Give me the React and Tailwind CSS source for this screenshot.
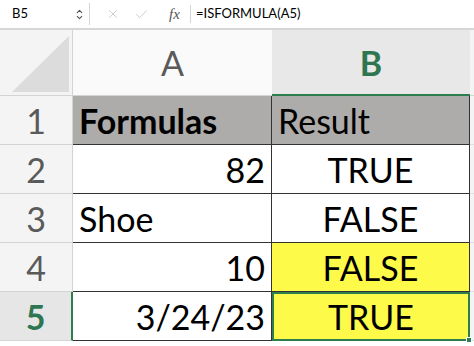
import { ChevronUp, ChevronDown, X, Check } from "lucide-react";

const rows = [
  { n: "1", a: "Formulas", aAlign: "left", aBold: true, b: "Result", bAlign: "left", bg: "gray" },
  { n: "2", a: "82", aAlign: "right", b: "TRUE", bAlign: "center" },
  { n: "3", a: "Shoe", aAlign: "left", b: "FALSE", bAlign: "center" },
  { n: "4", a: "10", aAlign: "right", b: "FALSE", bAlign: "center", bg: "yellow" },
  { n: "5", a: "3/24/23", aAlign: "right", b: "TRUE", bAlign: "center", bg: "yellow", active: true },
];

const font = { fontFamily: "Lato, 'Liberation Sans', sans-serif" };

function FormulaBar() {
  return (
    <div className="flex h-[30px] items-center border-b-2 border-[#d6d6d6] bg-white text-[13px] text-black" style={font}>
      <div className="flex w-[89px] items-center justify-between pl-[12px] pr-[5px]">
        <span>B5</span>
        <div className="flex flex-col text-[#555] -space-y-[3px]">
          <ChevronUp size={9} strokeWidth={3} />
          <ChevronDown size={9} strokeWidth={3} />
        </div>
      </div>
      <div className="h-[22px] w-px bg-[#d6d6d6]" />
      <div className="flex w-[100px] items-center gap-[14px] pl-[16px] text-[#c8c8c8]">
        <X size={14} strokeWidth={1.5} />
        <Check size={15} strokeWidth={1.5} />
        <span className="pl-[6px] font-serif italic text-[15px] text-[#555]" style={{ fontFamily: "'Liberation Serif', serif" }}>fx</span>
      </div>
      <div className="h-[18px] w-px bg-[#d6d6d6]" />
      <span className="pl-[5px]">=ISFORMULA(A5)</span>
    </div>
  );
}

export default function App() {
  return (
    <div className="h-[346px] w-[474px] overflow-hidden bg-white">
      <FormulaBar />
      <div className="grid grid-cols-[73px_199px_198px_4px]" style={font}>
        <div className="relative h-[66px] border-r border-b border-[#d4d4d4] bg-[#f4f4f4]">
          <svg className="absolute inset-0" width="72" height="65">
            <polygon points="12,62 69,6 69,62" fill="#dcdcdc" />
          </svg>
        </div>
        <div className="flex h-[66px] items-center justify-center border-b border-[#d4d4d4] bg-[#fafafa] text-[34px] text-[#5a5a5a]">
          A
        </div>
        <div className="flex h-[66px] items-center justify-center border-b-2 border-[#2e7d4f] bg-[#e8e8e8] text-[34px] font-bold text-[#2e7651]">
          B
        </div>
        <div className="h-[66px] bg-[#f4f4f4] border-b border-[#d4d4d4]" />
        {rows.map((r) => (
          <Row key={r.n} r={r} />
        ))}
      </div>
    </div>
  );
}

function Row({ r }) {
  const alignA = r.aAlign === "right" ? "justify-end pr-[6px]" : "justify-start pl-[6px]";
  const alignB = r.bAlign === "center" ? "justify-center" : "justify-start pl-[6px]";
  const bgA = r.bg === "gray" ? "bg-[#aeabab]" : "bg-white";
  const bgB = r.bg === "gray" ? "bg-[#aeabab]" : r.bg === "yellow" ? "bg-[#fdfa4a]" : "bg-white";
  return (
    <>
      <div
        className={
          r.active
            ? "flex h-[49px] items-center justify-center border-r-2 border-b border-r-[#2e7d4f] border-b-[#d4d4d4] bg-[#e6e6e6] text-[34px] font-bold text-[#2e7651]"
            : "flex h-[49px] items-center justify-center border-r border-b border-[#d4d4d4] bg-[#f4f4f4] text-[34px] text-[#5a5a5a]"
        }
      >
        {r.n}
      </div>
      <div
        className={`flex h-[49px] items-center border-r border-b border-[#333] text-[34px] text-black ${bgA} ${alignA} ${r.aBold ? "font-bold" : ""} ${r.active ? "border-[#4a6b55]" : ""}`}
      >
        {r.a}
      </div>
      <div
        className={`relative flex h-[49px] items-center text-[34px] text-black ${bgB} ${alignB} ${
          r.active ? "border-2 border-[#2e7d4f]" : "border-r border-b border-[#333]"
        }`}
      >
        {r.b}
        {r.active && <div className="absolute -right-[4px] -bottom-[4px] h-[6px] w-[6px] bg-[#2e7d4f] border border-white" />}
      </div>
      <div className="h-[49px] bg-[#f4f4f4] border-b border-[#e0e0e0]" />
    </>
  );
}
